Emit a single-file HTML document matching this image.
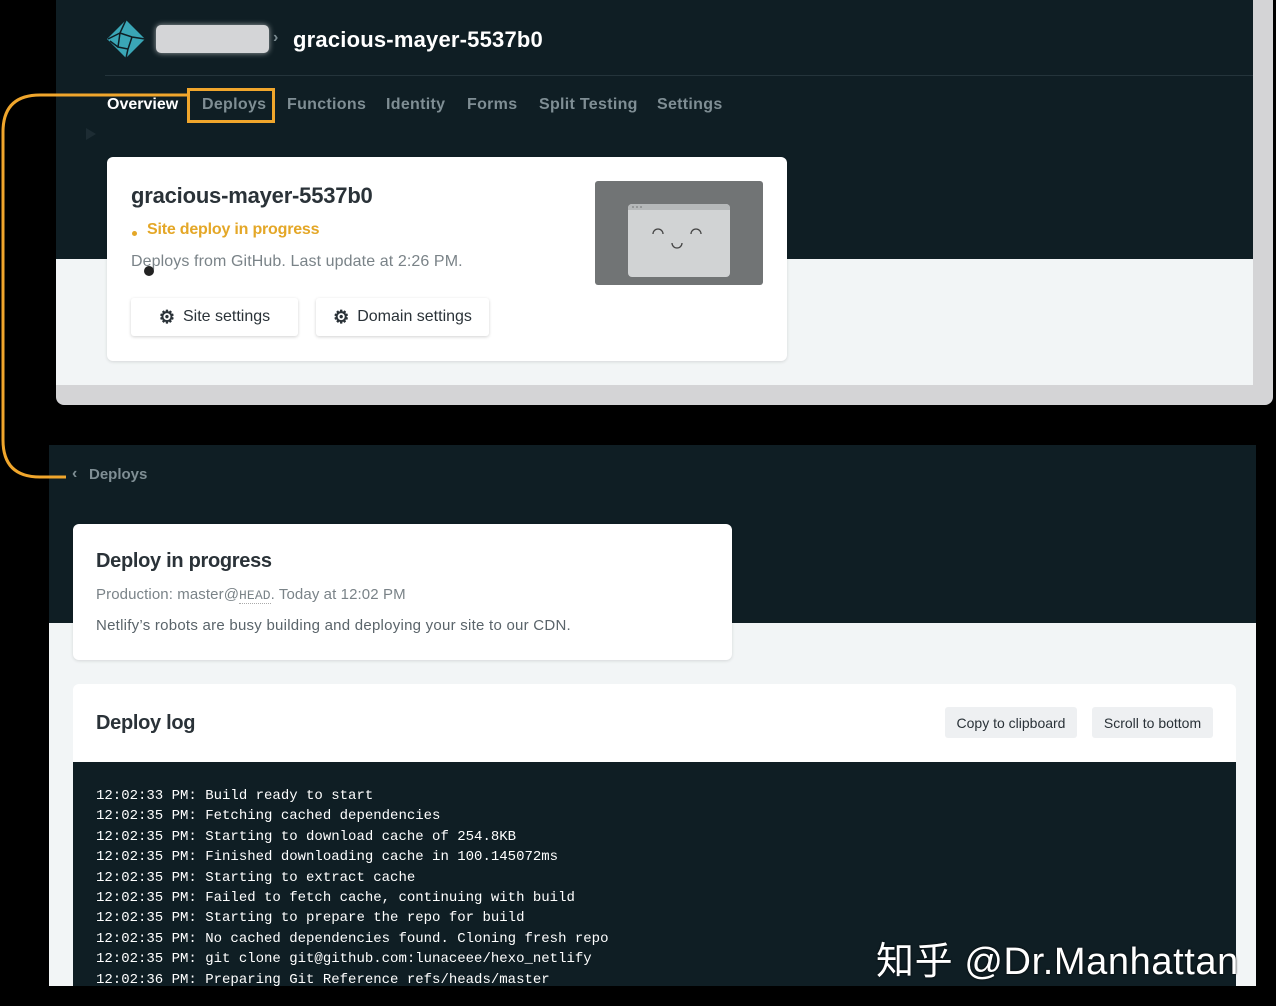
<!DOCTYPE html>
<html><head><meta charset="utf-8"><style>
*{margin:0;padding:0;box-sizing:border-box}
body{width:1276px;height:1006px;background:#000;position:relative;overflow:hidden;font-family:"Liberation Sans",sans-serif}
.a{position:absolute}
.mono{font-family:"Liberation Mono",monospace}
.btn{position:absolute;background:#fff;border-radius:3px;box-shadow:0 1px 3px rgba(0,0,0,.18);font-size:16px;color:#2a3238;display:flex;align-items:center;justify-content:center;gap:8px}
.gb{position:absolute;background:#eef0f2;border-radius:3px;font-size:14px;color:#2a3238;display:flex;align-items:center;justify-content:center}
.nav{position:absolute;top:96px;color:#7f8e94;font-size:16px;letter-spacing:.3px;font-weight:bold;-webkit-text-stroke:0}
</style></head><body>
<div class="a" style="left:56px;top:0;width:1217px;height:405px;background:#d4d4d6;border-radius:0 0 8px 8px"></div>
<div class="a" style="left:56px;top:0;width:1197px;height:259px;background:#0f1e24"></div>
<div class="a" style="left:56px;top:259px;width:1197px;height:126px;background:#f2f5f6"></div>
<div class="a" style="left:105px;top:75px;width:1148px;height:1px;background:#24343b"></div>
<svg class="a" style="left:106px;top:19px" width="40" height="40" viewBox="0 0 40 40"><path d="M20 1L39 20L20 39L1 20Z" fill="#3aa6b6"/><path d="M20 1L14 14L2 20M14 14L26 18L39 20M26 18L22 30L20 39M14 14L12 28L22 30M12 28L4 22" stroke="#0f1e24" stroke-width="1.5" fill="none"/></svg>
<div class="a" style="left:156px;top:25px;width:113px;height:28px;background:#d4d5d7;border-radius:5px;box-shadow:0 0 6px rgba(255,255,255,.6)"></div>
<div class="a" style="left:273px;top:29px;color:#7a8a90;font-size:16px;font-weight:bold">›</div>
<div class="a" style="left:293px;top:27px;color:#fff;font-size:22px;font-weight:bold;letter-spacing:.2px">gracious-mayer-5537b0</div>
<div class="nav" style="left:107px;color:#fff;letter-spacing:0">Overview</div>
<div class="nav" style="left:202px">Deploys</div>
<div class="nav" style="left:287px">Functions</div>
<div class="nav" style="left:386px">Identity</div>
<div class="nav" style="left:467px">Forms</div>
<div class="nav" style="left:539px">Split Testing</div>
<div class="nav" style="left:657px">Settings</div>
<div class="a" style="left:187px;top:88px;width:88px;height:35px;border:3px solid #f0a62c"></div>
<div class="a" style="left:86px;top:128px;width:0;height:0;border-left:10px solid #1d2c33;border-top:6px solid transparent;border-bottom:6px solid transparent"></div>
<div class="a" style="left:107px;top:157px;width:680px;height:204px;background:#fff;border-radius:6px;box-shadow:0 1px 3px rgba(0,0,0,.12)"></div>
<div class="a" style="left:131px;top:183px;color:#2a3238;font-size:22px;font-weight:bold;letter-spacing:-.2px">gracious-mayer-5537b0</div>
<div class="a" style="left:132px;top:231px;width:5px;height:5px;border-radius:50%;background:#e4a727"></div>
<div class="a" style="left:147px;top:221px;color:#e4a727;font-size:16px;font-weight:bold;letter-spacing:-.2px">Site deploy in progress</div>
<div class="a" style="left:131px;top:253px;color:#7a8388;font-size:16px;letter-spacing:.1px">Deploys from GitHub. Last update at 2:26 PM.</div>
<div class="a" style="left:144px;top:266px;width:10px;height:10px;border-radius:50%;background:#222"></div>
<div class="btn" style="left:131px;top:298px;width:167px;height:38px"><span style="font-size:18px;font-weight:bold">⚙</span>Site settings</div>
<div class="btn" style="left:316px;top:298px;width:173px;height:38px"><span style="font-size:18px;font-weight:bold">⚙</span>Domain settings</div>
<div class="a" style="left:595px;top:181px;width:168px;height:104px;background:#717475;border-radius:3px"></div>
<div class="a" style="left:628px;top:204px;width:102px;height:73px;background:#d1d3d4;border-radius:4px;overflow:hidden"><div style="height:6px;background:#b5b8b9"></div></div>
<svg class="a" style="left:628px;top:204px" width="102" height="73"><g fill="#8a8d8e"><circle cx="5" cy="3" r="1"/><circle cx="9" cy="3" r="1"/><circle cx="13" cy="3" r="1"/></g><g stroke="#444" stroke-width="1.3" fill="none"><path d="M25 30a5 5 0 0 1 10 0"/><path d="M63 30a5 5 0 0 1 10 0"/><path d="M44 39a5 5 0 0 0 10 0"/></g></svg>
<div class="a" style="left:49px;top:445px;width:1207px;height:541px;background:#f2f5f6"></div>
<div class="a" style="left:49px;top:445px;width:1207px;height:178px;background:#0f1e24"></div>
<div class="a" style="left:72px;top:465px;color:#7f8e94;font-size:16px;font-weight:bold">‹</div>
<div class="a" style="left:89px;top:466px;color:#7f8e94;font-size:15px;font-weight:bold">Deploys</div>
<div class="a" style="left:73px;top:524px;width:659px;height:136px;background:#fff;border-radius:6px;box-shadow:0 1px 3px rgba(0,0,0,.12)"></div>
<div class="a" style="left:96px;top:550px;color:#2a3238;font-size:20px;font-weight:bold;letter-spacing:-.3px">Deploy in progress</div>
<div class="a" style="left:96px;top:586px;color:#7a8388;font-size:15px;letter-spacing:.1px">Production: master@<span class="mono" style="font-size:13px;border-bottom:1px dotted #aaa">HEAD</span>. Today at 12:02 PM</div>
<div class="a" style="left:96px;top:617px;color:#5a646a;font-size:15px;letter-spacing:.25px">Netlify’s robots are busy building and deploying your site to our CDN.</div>
<div class="a" style="left:73px;top:684px;width:1163px;height:302px;background:#fff;border-radius:6px 6px 0 0"></div>
<div class="a" style="left:96px;top:712px;color:#2a3238;font-size:20px;font-weight:bold;letter-spacing:-.3px">Deploy log</div>
<div class="gb" style="left:945px;top:707px;width:132px;height:31px">Copy to clipboard</div>
<div class="gb" style="left:1092px;top:707px;width:121px;height:31px">Scroll to bottom</div>
<div class="a" style="left:73px;top:762px;width:1163px;height:224px;background:#0f1e24"></div>
<pre class="a mono" style="left:96px;top:786px;color:#fff;font-size:14px;line-height:20.4px">12:02:33 PM: Build ready to start
12:02:35 PM: Fetching cached dependencies
12:02:35 PM: Starting to download cache of 254.8KB
12:02:35 PM: Finished downloading cache in 100.145072ms
12:02:35 PM: Starting to extract cache
12:02:35 PM: Failed to fetch cache, continuing with build
12:02:35 PM: Starting to prepare the repo for build
12:02:35 PM: No cached dependencies found. Cloning fresh repo
12:02:35 PM: git clone git@github.com:lunaceee/hexo_netlify
12:02:36 PM: Preparing Git Reference refs/heads/master</pre>
<div class="a" style="left:876px;top:930px;color:#fff;font-size:38px;letter-spacing:.6px;font-family:'Liberation Sans','Noto Sans CJK SC',sans-serif;text-shadow:0 0 2px #000">知乎 @Dr.Manhattan</div>
<svg class="a" style="left:0;top:0" width="200" height="500"><path d="M187 95H40Q3 95 3 132V440Q3 477 40 477H66" stroke="#f0a62c" stroke-width="3" fill="none"/></svg>
</body></html>
